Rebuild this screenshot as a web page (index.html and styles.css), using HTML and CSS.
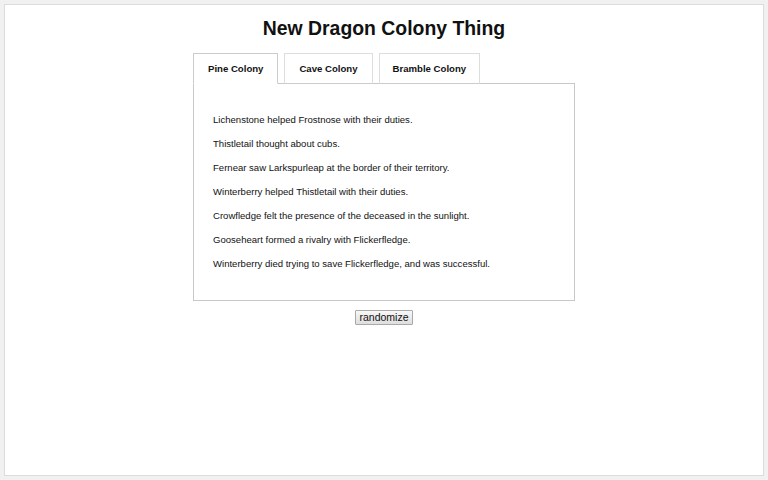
FILE: index.html
```html
<!DOCTYPE html>
<html>
<head>
<meta charset="utf-8">
<title>New Dragon Colony Thing</title>
<link rel="stylesheet" href="styles.css">
</head>
<body>
<div class="page">
  <h1 class="title">New Dragon Colony Thing</h1>
  <div class="colonies">
    <ul class="tabs">
      <li class="tab active">Pine Colony</li>
      <li class="tab">Cave Colony</li>
      <li class="tab">Bramble Colony</li>
    </ul>
    <div class="panel">
      <p>Lichenstone helped Frostnose with their duties.</p>
      <p>Thistletail thought about cubs.</p>
      <p>Fernear saw Larkspurleap at the border of their territory.</p>
      <p>Winterberry helped Thistletail with their duties.</p>
      <p>Crowfledge felt the presence of the deceased in the sunlight.</p>
      <p>Gooseheart formed a rivalry with Flickerfledge.</p>
      <p>Winterberry died trying to save Flickerfledge, and was successful.</p>
    </div>
  </div>
  <button class="randomize" type="button">randomize</button>
</div>
</body>
</html>
```
FILE: styles.css
```css
html, body {
  margin: 0;
  padding: 0;
}

body {
  background: #f1f1f1;
  font-family: "Liberation Sans", Arial, sans-serif;
  color: #111;
  padding: 4px;
  height: 480px;
  box-sizing: border-box;
}

.page {
  background: #fff;
  border: 1px solid #dcdcdc;
  height: 100%;
  box-sizing: border-box;
  display: flex;
  flex-direction: column;
  align-items: center;
}

.title {
  font-size: 19.4px;
  font-weight: bold;
  margin: 12px 0 13px;
  line-height: 23px;
}

.colonies {
  width: 382px;
  display: flex;
  flex-direction: column;
}

.tabs {
  list-style: none;
  margin: 0;
  padding: 0;
  display: flex;
  gap: 6px;
  position: relative;
  z-index: 1;
}

.tab {
  font-size: 9.6px;
  font-weight: bold;
  height: 29px;
  line-height: 29px;
  padding: 0 14px;
  border: 1px solid #ddd;
  border-bottom-color: #ccc;
  background: #fff;
}

.tab:last-child {
  padding: 0 13px;
}

.tab.active {
  border-color: #ccc;
  border-bottom-color: #fff;
}

.panel {
  border: 1px solid #c8c8c8;
  margin-top: -1px;
  padding: 18px 19px 18px;
}

.panel p {
  font-size: 9.55px;
  line-height: 12px;
  margin: 12px 0;
}

.randomize {
  margin-top: 9px;
  font-family: "Liberation Sans", Arial, sans-serif;
  font-size: 10.5px;
  line-height: 13px;
  padding: 0 3px;
  color: #111;
  border: 1px solid #a9a9a9;
  border-radius: 1px;
  background: linear-gradient(#f8f8f8, #dedede);
}
```
